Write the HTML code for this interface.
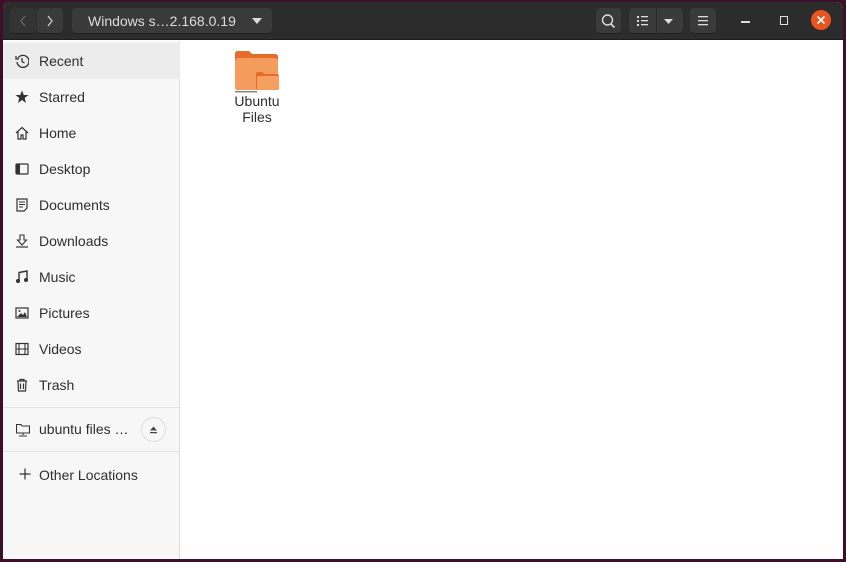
<!DOCTYPE html>
<html><head><style>
*{margin:0;padding:0;box-sizing:border-box}
body{width:846px;height:562px;background:#3b1028;position:relative;overflow:hidden;font-family:"Liberation Sans","DejaVu Sans",sans-serif}
.win{position:absolute;left:3px;top:2px;width:840px;height:557px;background:#fff;border-radius:7px 7px 0 0;overflow:hidden}
.hb{position:absolute;left:0;top:0;width:840px;height:38px;background:#2c2c2c;border-bottom:1px solid #1d1d1d}
.btn{position:absolute;top:6px;height:26px;background:#3a3a3a;border-radius:4px;border-bottom:1px solid #1f1f1f}
.side{position:absolute;left:0;top:39px;width:177px;height:518px;background:#f7f7f7;border-right:1px solid #dcdcdc}
.row{position:absolute;left:0;width:177px;height:36px;font-size:14px;color:#2e2e2e;line-height:36px;padding-left:36px}
.row svg{position:absolute;left:12px;top:11px}
.sep{position:absolute;left:0;width:177px;height:1px;background:#e2e2e2}
</style></head><body>
<div class="win">
<div class="hb">
 <div class="btn" style="left:7px;width:26px;background:#333"><svg width="26" height="26"><path d="M15 8 L11 13 L15 18" stroke="#666" stroke-width="1.3" fill="none"/></svg></div>
 <div class="btn" style="left:34px;width:26px;background:#3a3a3a"><svg width="26" height="26"><path d="M11 8 L15 13 L11 18" stroke="#ccc" stroke-width="1.3" fill="none"/></svg></div>
 <div class="btn" style="left:69px;width:200px;color:#ddd;font-size:14px;line-height:26px;padding-left:16px">Windows s…2.168.0.19<svg style="position:absolute;left:180px;top:10px" width="10" height="6"><path d="M0 0H10L5 6Z" fill="#ddd"/></svg></div>
 <div class="btn" style="left:593px;width:25px"><svg width="25" height="26"><circle cx="11.5" cy="12" r="5" stroke="#ddd" stroke-width="1.4" fill="none"/><path d="M15 16 L18.5 19.5" stroke="#ddd" stroke-width="1.6"/></svg></div>
 <div class="btn" style="left:626px;width:54px"><svg width="54" height="26"><g fill="#ddd"><rect x="8" y="8" width="2" height="2"/><rect x="8" y="12" width="2" height="2"/><rect x="8" y="16" width="2" height="2"/><rect x="12" y="8" width="7" height="1.3"/><rect x="12" y="12" width="7" height="1.3"/><rect x="12" y="16" width="7" height="1.3"/><path d="M35 11H44L39.5 16Z"/></g><rect x="27" y="0" width="1" height="26" fill="#2a2a2a"/></svg></div>
 <div class="btn" style="left:687px;width:26px"><svg width="26" height="26"><g fill="#ddd"><rect x="8" y="8" width="10" height="1.3"/><rect x="8" y="12" width="10" height="1.3"/><rect x="8" y="16" width="10" height="1.3"/></g></svg></div>
 <div style="position:absolute;left:738px;top:19px;width:9px;height:1.5px;background:#ddd"></div>
 <div style="position:absolute;left:777px;top:14px;width:8px;height:9px;border:1.5px solid #ddd"></div>
 <div style="position:absolute;left:808px;top:8px;width:20px;height:20px;border-radius:50%;background:#e95420"><svg width="20" height="20"><path d="M6.5 6.5L13.5 13.5M13.5 6.5L6.5 13.5" stroke="#fff" stroke-width="1.6"/></svg></div>
</div>
<div class="side">
 <div class="row" style="top:2px;background:#ececec"><svg width="14" height="14"><path d="M3 4 A6 6 0 1 1 2 8" stroke="#333" stroke-width="1.3" fill="none"/><path d="M1 2V5H4" stroke="#333" stroke-width="1.3" fill="none"/><path d="M7 4V7.5L9.5 9" stroke="#333" stroke-width="1.3" fill="none"/></svg>Recent</div>
 <div class="row" style="top:38px"><svg width="14" height="14"><path d="M7 0.5L8.8 5H13.5L9.7 8L11 13L7 10L3 13L4.3 8L0.5 5H5.2Z" fill="#333"/></svg>Starred</div>
 <div class="row" style="top:74px"><svg width="14" height="14"><path d="M1 7L7 1.5L13 7M3 6V13H6V9H8V13H11V6" stroke="#333" stroke-width="1.2" fill="none"/></svg>Home</div>
 <div class="row" style="top:110px"><svg width="14" height="14"><rect x="1" y="2" width="12" height="10" stroke="#333" stroke-width="1.2" fill="none" rx="1"/><rect x="1" y="2" width="4" height="10" fill="#333"/></svg>Desktop</div>
 <div class="row" style="top:146px"><svg width="14" height="14"><path d="M2 1H12V10L9 13H2Z" stroke="#333" stroke-width="1.2" fill="none"/><path d="M4 4H10M4 6.5H10M4 9H8" stroke="#333" stroke-width="1.1"/></svg>Documents</div>
 <div class="row" style="top:182px"><svg width="14" height="14"><path d="M5 1H9V6H11.5L7 11L2.5 6H5Z" stroke="#333" stroke-width="1.1" fill="none"/><path d="M1 13H13" stroke="#333" stroke-width="1.2"/></svg>Downloads</div>
 <div class="row" style="top:218px"><svg width="14" height="14"><path d="M4 11V2.5L12 1V10" stroke="#333" stroke-width="1.4" fill="none"/><circle cx="3" cy="11" r="2" fill="#333"/><circle cx="11" cy="10" r="2" fill="#333"/></svg>Music</div>
 <div class="row" style="top:254px"><svg width="14" height="14"><rect x="1" y="2" width="12" height="10" stroke="#333" stroke-width="1.2" fill="none"/><path d="M2 11L6 7L8 9L10 6L12 11Z" fill="#333"/><circle cx="4.5" cy="5" r="1" fill="#333"/></svg>Pictures</div>
 <div class="row" style="top:290px"><svg width="14" height="14"><rect x="1" y="1.5" width="12" height="11" stroke="#333" stroke-width="1.2" fill="none"/><path d="M4 2V12M10 2V12M1 7H13" stroke="#333" stroke-width="1.1"/></svg>Videos</div>
 <div class="row" style="top:326px"><svg width="14" height="14"><path d="M2 3H12M5 3V1.5H9V3M3 3L3.5 13H10.5L11 3M5.5 5.5V11M8.5 5.5V11" stroke="#333" stroke-width="1.2" fill="none"/></svg>Trash</div>
 <div class="sep" style="top:366px"></div>
 <div class="row" style="top:370px"><svg width="14" height="14" style="left:13px;top:12px"><path d="M0.5 1.5H5L6 3H13.5V10H0.5Z" stroke="#333" stroke-width="1.1" fill="none"/><path d="M7 10V12M3 13H11" stroke="#333" stroke-width="1.1"/></svg>ubuntu files …<div style="position:absolute;left:138px;top:6px;width:25px;height:25px;border:1px solid #ddd;border-radius:50%;background:#f7f7f7"><svg width="23" height="23" style="left:0;top:0"><path d="M8 12.5H15L11.5 8.5Z M8 14H15V15.3H8Z" fill="#444"/></svg></div></div>
 <div class="sep" style="top:410px"></div>
 <div class="row" style="top:416px"><svg width="14" height="14" style="left:16px"><path d="M6 0.5V11.5M0.5 6H11.5" stroke="#333" stroke-width="1.2"/></svg>Other Locations</div>
</div>
<div style="position:absolute;left:231px;top:46px;width:48px;height:46px">
 <svg width="48" height="46"><path d="M1 6 Q1 3 4 3 H15 L18 6 H41 Q44 6 44 9 V39 Q44 42 41 42 H4 Q1 42 1 39Z" fill="#e46b2a"/><rect x="1" y="10" width="43" height="32" rx="3" fill="#f39c5b"/><path d="M22 26 Q22 24 24 24 H28 L30 26 H42 Q45 26 45 28 V40 Q45 42 43 42 H24 Q22 42 22 40Z" fill="#e46b2a"/><rect x="23" y="28" width="22" height="14" rx="1.5" fill="#f4a061"/><rect x="1" y="43" width="22" height="1.5" fill="#888"/></svg>
</div>
<div style="position:absolute;left:214px;top:91px;width:80px;text-align:center;font-size:14px;line-height:16px;color:#2e2e2e">Ubuntu<br>Files</div>
</div>
</body></html>
